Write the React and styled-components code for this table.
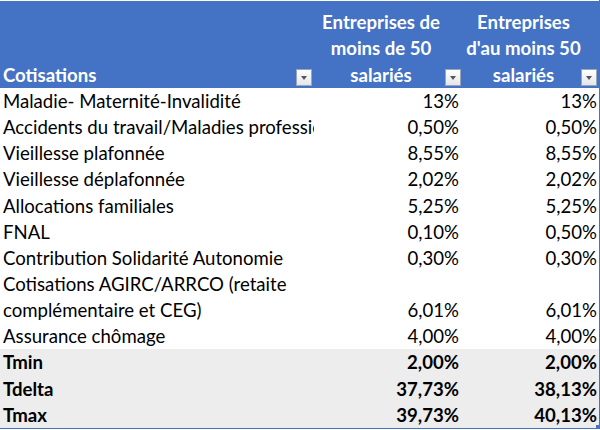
import React from "react";
import styled, { createGlobalStyle } from "styled-components";

const GlobalStyle = createGlobalStyle`
  html, body {
    margin: 0;
    padding: 0;
    background: #ffffff;
  }
  body {
    font-family: "Lato", "Open Sans", sans-serif;
    color: #000;
  }
`;

const rows = [
  { label: "Maladie- Maternité-Invalidité", a: "13%", b: "13%" },
  { label: "Accidents du travail/Maladies professionnelles", a: "0,50%", b: "0,50%" },
  { label: "Vieillesse plafonnée", a: "8,55%", b: "8,55%" },
  { label: "Vieillesse déplafonnée", a: "2,02%", b: "2,02%" },
  { label: "Allocations familiales", a: "5,25%", b: "5,25%" },
  { label: "FNAL", a: "0,10%", b: "0,50%" },
  { label: "Contribution Solidarité Autonomie", a: "0,30%", b: "0,30%" },
  {
    label: "Cotisations AGIRC/ARRCO (retaite complémentaire et CEG)",
    a: "6,01%",
    b: "6,01%",
    wrap: true
  },
  { label: "Assurance chômage", a: "4,00%", b: "4,00%" },
  { label: "Tmin", a: "2,00%", b: "2,00%", total: true },
  { label: "Tdelta", a: "37,73%", b: "38,13%", total: true },
  { label: "Tmax", a: "39,73%", b: "40,13%", total: true }
];

const Sheet = styled.div`
  width: 599px;
  padding-top: 1px;
  border-right: 1px solid #4472c4;
  border-bottom: 1px solid #4472c4;
  position: relative;
`;

const cols = "314px 149px 136px";

const Header = styled.div`
  display: grid;
  grid-template-columns: ${cols};
  height: 87px;
  background: #4472c4;
  color: #fff;
  font-weight: 700;
  font-size: 18.6px;
`;

const HeadCell = styled.div`
  position: relative;
  display: flex;
  flex-direction: column;
  justify-content: flex-end;
  align-items: ${p => (p.$center ? "center" : "flex-start")};
  text-align: ${p => (p.$center ? "center" : "left")};
  padding: 0 ${p => (p.$center ? "18px" : "3px")} 0 3px;
  line-height: 26.5px;
  padding-bottom: 0;
  white-space: nowrap;
`;

const Filter = styled.span`
  position: absolute;
  right: 2px;
  bottom: 2px;
  width: 16px;
  height: 17px;
  box-sizing: border-box;
  border: 1px solid #9aa6b8;
  background: linear-gradient(#ffffff, #e4e6ea);
  display: flex;
  align-items: center;
  justify-content: center;

  &::after {
    content: "";
    width: 0;
    height: 0;
    border-left: 3.5px solid transparent;
    border-right: 3.5px solid transparent;
    border-top: 4px solid #555;
    margin-top: 1px;
  }
`;

const Row = styled.div`
  display: grid;
  grid-template-columns: ${cols};
  height: ${p => (p.$wrap ? "52.3px" : "26.15px")};
  background: ${p => (p.$total ? "#ededed" : "#fff")};
  font-weight: ${p => (p.$total ? 700 : 400)};
  font-size: 18.6px;
  line-height: 26.15px;
`;

const Label = styled.div`
  padding-left: 3px;
  overflow: hidden;
  white-space: ${p => (p.$wrap ? "normal" : "nowrap")};
  align-self: end;
`;

const Value = styled.div`
  text-align: right;
  padding-right: ${p => (p.$last ? "2px" : "4px")};
  align-self: end;
  white-space: nowrap;
`;

const Corner = styled.span`
  position: absolute;
  right: -1px;
  bottom: -1px;
  width: 4px;
  height: 4px;
  background: #4472c4;
`;

export default function App() {
  return (
    <>
      <GlobalStyle />
      <Sheet>
        <Header>
          <HeadCell>
            Cotisations
            <Filter />
          </HeadCell>
          <HeadCell $center>
            <span>Entreprises de</span>
            <span>moins de 50</span>
            <span>salariés</span>
            <Filter />
          </HeadCell>
          <HeadCell $center>
            <span>Entreprises</span>
            <span>d'au moins 50</span>
            <span>salariés</span>
            <Filter />
          </HeadCell>
        </Header>
        {rows.map(r => (
          <Row key={r.label} $wrap={r.wrap} $total={r.total}>
            <Label $wrap={r.wrap}>{r.label}</Label>
            <Value>{r.a}</Value>
            <Value $last>{r.b}</Value>
          </Row>
        ))}
        <Corner />
      </Sheet>
    </>
  );
}
